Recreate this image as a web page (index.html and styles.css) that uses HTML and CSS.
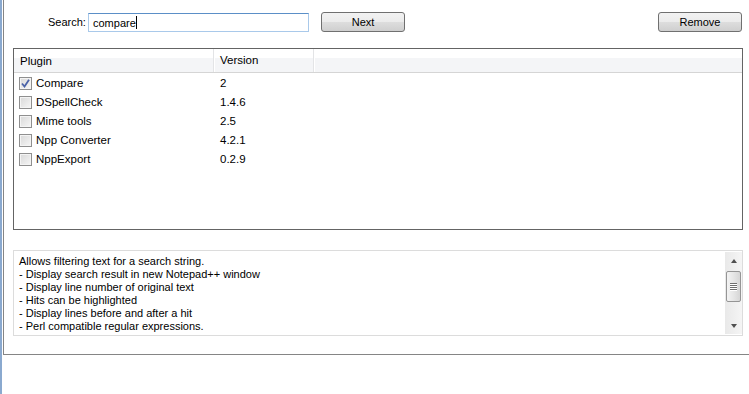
FILE: index.html
```html
<!DOCTYPE html>
<html lang="en">
<head>
  <meta charset="UTF-8" />
  <title>Plugins Admin</title>
  <link rel="stylesheet" href="styles.css">
</head>
<body>

<div class="window">
  <div class="panel">
    <div class="search-row">
      <label class="search-label" for="search">Search:</label>
      <div class="search-input" id="search">compare<span class="caret"></span></div>
      <div class="btn next">Next</div>
      <div class="spacer"></div>
      <div class="btn remove">Remove</div>
    </div>

    <div class="list">
      <div class="list-head">
        <div class="col col-name">Plugin</div>
        <div class="col col-ver">Version</div>
        <div class="col col-rest"></div>
      </div>
      <div class="row">
        <div class="col col-name"><span class="check checked"><svg width="9" height="9" viewBox="0 0 9 9"><path d="M1 4.5 L3.5 7.5 L8 0.8" fill="none" stroke="#4a62a8" stroke-width="1.8"/></svg></span>Compare</div>
        <div class="col col-ver">2</div>
      </div>
      <div class="row">
        <div class="col col-name"><span class="check"></span>DSpellCheck</div>
        <div class="col col-ver">1.4.6</div>
      </div>
      <div class="row">
        <div class="col col-name"><span class="check"></span>Mime tools</div>
        <div class="col col-ver">2.5</div>
      </div>
      <div class="row">
        <div class="col col-name"><span class="check"></span>Npp Converter</div>
        <div class="col col-ver">4.2.1</div>
      </div>
      <div class="row">
        <div class="col col-name"><span class="check"></span>NppExport</div>
        <div class="col col-ver">0.2.9</div>
      </div>
    </div>

    <div class="desc">
      <div class="desc-text">
        <p>Allows filtering text for a search string.</p>
        <p>- Display search result in new Notepad++ window</p>
        <p>- Display line number of original text</p>
        <p>- Hits can be highlighted</p>
        <p>- Display lines before and after a hit</p>
        <p>- Perl compatible regular expressions.</p>
      </div>
      <div class="scrollbar">
        <div class="arrow up"></div>
        <div class="thumb"><i></i><i></i><i></i><i></i></div>
        <div class="track"></div>
        <div class="arrow down"></div>
      </div>
    </div>
  </div>
</div>

</body>
</html>
```

FILE: styles.css
```css
* { box-sizing: border-box; }
body {
  margin: 0;
  background: #fff;
  color: #000;
  font-family: 'Liberation Sans', Arial, sans-serif;
  font-size: 11px;
}
.window {
  height: 394px;
  border-left: 2px solid #8aa9cf;
}
.panel {
  margin-left: 1px;
  height: 355px;
  padding-top: 12px;
  border-left: 1px solid #858585;
  border-bottom: 1px solid #858585;
}
.search-row {
  display: flex;
  align-items: center;
  height: 20px;
  padding-left: 44px;
  padding-right: 7px;
}
.search-label { width: 40px; }
.search-input {
  width: 221px;
  height: 19px;
  border: 1px solid #a9c9ea;
  border-top-color: #5b8fc7;
  padding: 2px 4px;
  line-height: 14px;
}
.caret {
  display: inline-block;
  width: 1px;
  height: 13px;
  background: #000;
  vertical-align: -2px;
}
.btn {
  width: 84px;
  height: 20px;
  border: 1px solid #707070;
  border-radius: 3px;
  background: linear-gradient(to bottom, #f2f2f2 0%, #ebebeb 50%, #dddddd 51%, #cfcfcf 100%);
  text-align: center;
  line-height: 18px;
}
.next { margin-left: 12px; }
.spacer { flex: 1; }
.list {
  margin: 16px 0 0 9px;
  width: 730px;
  height: 182px;
  border: 1px solid #646464;
  font-size: 11.5px;
}
.list-head {
  display: flex;
  height: 24px;
  border-bottom: 1px solid #d5d5d5;
  background: linear-gradient(to bottom, #fff 0%, #fff 38%, #f4f5f7 40%, #f4f5f7 100%);
}
.list-head .col {
  line-height: 22px;
  border-right: 1px solid #e3e4e6;
  box-shadow: 1px 0 0 #fff;
}
.list-head .col-rest { flex: 1; border-right: none; box-shadow: none; }
.col-name { width: 200px; padding-left: 6px; display: flex; align-items: center; }
.col-ver { width: 100px; padding-left: 6px; }
.row {
  display: flex;
  height: 19px;
  line-height: 19px;
}
.row .col-name { padding-left: 5px; }
.list-head + .row { margin-top: 1px; }
.check {
  width: 13px;
  height: 13px;
  margin-right: 4px;
  border: 1px solid #8f8f8f;
  background: linear-gradient(135deg, #d8d8d8, #f6f6f6);
  box-shadow: inset 0 0 0 1px #f4f4f4;
  display: flex;
  align-items: center;
  justify-content: center;
}
.desc {
  margin: 20px 0 0 9px;
  width: 730px;
  height: 86px;
  border: 1px solid #dcdcdc;
  display: flex;
}
.desc-text {
  flex: 1;
  padding: 4px 0 0 5px;
  line-height: 13px;
}
.desc-text p { margin: 0; }
.scrollbar {
  width: 17px;
  margin: 1px 0;
  background: linear-gradient(to right, #e9e9e9, #f5f5f5);
  display: flex;
  flex-direction: column;
  align-items: center;
}
.arrow {
  height: 17px;
  width: 17px;
  display: flex;
  align-items: center;
  justify-content: center;
}
.arrow::after {
  content: "";
  border-left: 3.5px solid transparent;
  border-right: 3.5px solid transparent;
}
.arrow.up::after { border-bottom: 4px solid #505050; }
.arrow.down::after { border-top: 4px solid #505050; }
.thumb {
  width: 15px;
  height: 31px;
  margin-top: 2px;
  border: 1px solid #959595;
  border-radius: 2px;
  background: linear-gradient(to right, #f3f3f3, #e6e6e6 50%, #d6d6d6);
  display: flex;
  flex-direction: column;
  align-items: center;
  justify-content: center;
  gap: 1px;
}
.thumb i {
  display: block;
  width: 7px;
  height: 1px;
  background: #6e6e6e;
  box-shadow: 0 1px 0 #fff;
}
.track { flex: 1; }
```
